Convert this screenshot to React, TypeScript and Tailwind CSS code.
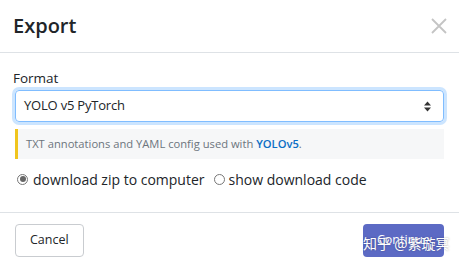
import React from 'react'

export default function App() {
  return (
    <div
      className="relative h-[267px] w-[459px] overflow-hidden bg-white text-[#212529]"
      style={{ fontFamily: '"Open Sans", "Noto Sans", sans-serif' }}
    >
      {/* Header */}
      <div className="flex h-[53px] items-center justify-between border-b border-[#dee2e6] pl-[13px] pr-[12px]">
        <h2 className="text-[20px] font-semibold leading-none">Export</h2>
        <button className="text-[#c4c4c4]">
          <svg width="16" height="16" viewBox="0 0 16 16" fill="none" stroke="currentColor" strokeWidth="1.8">
            <path d="M1 1L15 15M15 1L1 15" />
          </svg>
        </button>
      </div>

      {/* Body */}
      <div className="h-[160px] border-b border-[#dee2e6] px-[15px] pt-[15px]">
        <label className="-ml-[2px] block text-[13.5px] leading-[20px]">Format</label>
        <div className="mt-[2px] flex h-[32px] items-center justify-between rounded-[4px] border border-[#80bdff] pl-[8px] pr-[12px] shadow-[0_0_0_3px_rgba(0,123,255,0.2)]">
          <span className="text-[13px] tracking-[-0.2px]">YOLO v5 PyTorch</span>
          <svg width="7" height="11" viewBox="0 0 7 11" fill="#333">
            <path d="M3.5 0.5L7 4.5H0Z" />
            <path d="M3.5 10.5L0 6.5H7Z" />
          </svg>
        </div>

        <div className="mt-[7px] flex h-[30px] items-center border-l-[3px] border-[#f0c51e] bg-[#f6f7f8] pl-[8px]">
          <span className="text-[11.2px] text-[#6c757d]">
            TXT annotations and YAML config used with{' '}
            <span className="font-semibold text-[#0d6fc5]">YOLOv5</span>.
          </span>
        </div>

        <div className="mt-[10px] flex h-[20px] items-center text-[14px]">
          <label className="flex items-center">
            <span className="mr-[5px] ml-[2px] flex h-[11px] w-[11px] items-center justify-center rounded-full border border-[#777] bg-white">
              <span className="h-[6px] w-[6px] rounded-full bg-[#666]" />
            </span>
            download zip to computer
          </label>
          <label className="ml-[9px] flex items-center">
            <span className="mr-[4px] h-[11px] w-[11px] rounded-full border border-[#777] bg-white" />
            show download code
          </label>
        </div>
      </div>

      {/* Footer */}
      <div className="flex items-center justify-between px-[15px] pt-[11px]">
        <button className="h-[33px] rounded-[4px] border border-[#c9ccd0] bg-white px-[14px] text-[12.5px] text-[#212529]">
          Cancel
        </button>
        <button className="h-[33px] rounded-[4px] bg-[#5c6ac4] px-[14px] text-[12.5px] text-white">
          Continue
        </button>
      </div>

      {/* watermark */}
      <span
        className="absolute left-[363px] top-[236px] text-[14px] leading-none text-white [text-shadow:0_0_2px_rgba(0,0,0,0.35)]"
        style={{ fontFamily: '"Noto Sans CJK SC", sans-serif' }}
      >
        知乎 @紫璇冥
      </span>
    </div>
  )
}
